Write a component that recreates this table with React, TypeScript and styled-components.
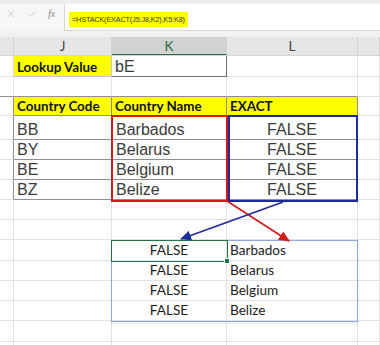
import React from 'react'
import styled, { createGlobalStyle } from 'styled-components'
import { X, Check } from 'lucide-react'

const GlobalStyle = createGlobalStyle`
  html, body { margin: 0; padding: 0; background: #fff; }
`

const COLS = '14px 98px 115px 131px 1fr'
const CALIBRI = `Lato, "Open Sans", sans-serif`
const ARIAL = `"Liberation Sans", Arial, sans-serif`

const Sheet = styled.div`
  position: relative;
  width: 380px;
  height: 345px;
  overflow: hidden;
  background: #fff;
  display: flex;
  flex-direction: column;
  & > * { flex-shrink: 0; }
`

const FormulaBar = styled.div`
  display: flex;
  height: 31px;
  padding-top: 4px;
  box-sizing: border-box;
  background: #ededed;
`

const Tools = styled.div`
  width: 64px;
  display: flex;
  align-items: flex-start;
  padding: 5px 0 0 6px;
  gap: 11px;
  background: #f7f7f7;
  color: #b5b5b5;
  box-sizing: border-box;
`

const Fx = styled.span`
  font-family: "Liberation Serif", serif;
  font-style: italic;
  font-size: 10px;
  color: #8a8a8a;
  margin-top: -1px;
`

const FormulaBox = styled.div`
  flex: 1;
  background: #fff;
  border-left: 1px solid #d6d6d6;
  border-bottom: 1px solid #d6d6d6;
  padding: 4px 0 0 4px;
`

const Formula = styled.span`
  background: #ffff00;
  font-family: ${ARIAL};
  font-size: 7.2px;
  color: #333;
  padding: 3px 3px;
  letter-spacing: -0.1px;
`

const Band = styled.div`
  height: 6px;
  background: #f1f1f1;
`

const HeaderRow = styled.div`
  display: grid;
  grid-template-columns: ${COLS};
  height: 19px;
  background: #e6e6e6;
  border-bottom: 1px solid #d4d4d4;
  box-sizing: border-box;
`

const ColHead = styled.div<{ $active?: boolean }>`
  display: flex;
  justify-content: center;
  align-items: center;
  border-right: 1px solid #d0d0d0;
  background: ${p => (p.$active ? '#d2d2d2' : 'transparent')};
  border-bottom: ${p => (p.$active ? '1px solid #217346' : 'none')};
  color: ${p => (p.$active ? '#2c6a3f' : '#444')};
  font-family: ${CALIBRI};
  font-size: 13.5px;
`

const Row = styled.div<{ $h: number }>`
  display: grid;
  grid-template-columns: ${COLS};
  height: ${p => p.$h}px;
`

const Cell = styled.div<{ $fill?: string; $line?: string; $bottom?: string; $center?: boolean }>`
  box-sizing: border-box;
  display: flex;
  align-items: flex-end;
  justify-content: ${p => (p.$center ? 'center' : 'flex-start')};
  padding: 0 3px 0 3px;
  overflow: hidden;
  white-space: nowrap;
  background: ${p => p.$fill ?? '#fff'};
  border-right: 1px solid ${p => p.$line ?? '#e2e2e2'};
  border-bottom: 1px solid ${p => p.$bottom ?? p.$line ?? '#e2e2e2'};
`

const Head = styled.span`
  font-family: ${CALIBRI};
  font-weight: 700;
  font-size: 13.4px;
  color: #111;
  line-height: 17px;
`

const Data = styled.span<{ $pad?: number }>`
  font-family: ${ARIAL};
  font-size: 16px;
  color: #3a3a3a;
  line-height: 19px;
  padding-left: ${p => p.$pad ?? 0}px;
`

const Spill = styled.span`
  font-family: ${CALIBRI};
  font-size: 13.6px;
  color: #1c1c1c;
  line-height: 19px;
`

const Outline = styled.div<{ $x: number; $y: number; $w: number; $h: number; $c: string; $b: number; $shadow?: boolean }>`
  position: absolute;
  left: ${p => p.$x}px;
  top: ${p => p.$y}px;
  width: ${p => p.$w}px;
  height: ${p => p.$h}px;
  border: ${p => p.$b}px solid ${p => p.$c};
  box-sizing: border-box;
  pointer-events: none;
  box-shadow: ${p => (p.$shadow ? '0 2px 4px rgba(0,0,0,0.08)' : 'none')};
`

const Handle = styled.div`
  position: absolute;
  right: -3px;
  bottom: -3px;
  width: 4px;
  height: 4px;
  background: #217346;
  border: 1px solid #fff;
`

const Arrows = styled.svg`
  position: absolute;
  left: 0;
  top: 0;
  pointer-events: none;
`

const TABLE = '#8f8f8f'

const names = ['Barbados', 'Belarus', 'Belgium', 'Belize']
const codes = ['BB', 'BY', 'BE', 'BZ']

const Blank = ({ h, bottom }: { h: number; bottom?: string }) => (
  <Row $h={h}>
    <Cell $bottom={bottom} />
    <Cell $bottom={bottom} />
    <Cell $bottom={bottom} />
    <Cell $bottom={bottom} />
    <Cell />
  </Row>
)

export default function App() {
  return (
    <>
      <GlobalStyle />
      <Sheet>
        <FormulaBar>
          <Tools>
            <X size={10} strokeWidth={1.5} />
            <Check size={10} strokeWidth={1.5} />
            <Fx>fx</Fx>
          </Tools>
          <FormulaBox>
            <Formula>=HSTACK(EXACT(J5:J8,K2),K5:K8)</Formula>
          </FormulaBox>
        </FormulaBar>
        <Band />
        <HeaderRow>
          <ColHead />
          <ColHead>J</ColHead>
          <ColHead $active>K</ColHead>
          <ColHead>L</ColHead>
          <ColHead />
        </HeaderRow>

        <Row $h={21}>
          <Cell />
          <Cell $fill="#ffff00" $line="#c9c9c9">
            <Head>Lookup Value</Head>
          </Cell>
          <Cell $line="#6e6e6e">
            <Data>bE</Data>
          </Cell>
          <Cell />
          <Cell />
        </Row>
        <Blank h={20} bottom={TABLE} />

        <Row $h={19}>
          <Cell $line={TABLE} $bottom="#e2e2e2" />
          <Cell $fill="#ffff00" $line={TABLE}>
            <Head>Country Code</Head>
          </Cell>
          <Cell $fill="#ffff00" $line={TABLE}>
            <Head>Country Name</Head>
          </Cell>
          <Cell $fill="#ffff00" $line={TABLE}>
            <Head>EXACT</Head>
          </Cell>
          <Cell />
        </Row>
        {codes.map((c, i) => (
          <Row $h={i === 0 ? 24 : 20} key={c}>
            <Cell $line={TABLE} $bottom="#e2e2e2" />
            <Cell $line={TABLE}>
              <Data>{c}</Data>
            </Cell>
            <Cell $line={TABLE}>
              <Data $pad={1}>{names[i]}</Data>
            </Cell>
            <Cell $line={TABLE} $center>
              <Data>FALSE</Data>
            </Cell>
            <Cell />
          </Row>
        ))}
        <Blank h={20} />
        <Blank h={20} />
        {names.map((n, i) => (
          <Row $h={i === 0 ? 21 : 20} key={n}>
            <Cell />
            <Cell />
            <Cell $center>
              <Spill>FALSE</Spill>
            </Cell>
            <Cell>
              <Spill>{n}</Spill>
            </Cell>
            <Cell />
          </Row>
        ))}
        <Blank h={21} />
        <Blank h={20} />

        <Outline $x={111} $y={115} $w={117} $h={87} $c="#d41919" $b={2} />
        <Outline $x={228} $y={115} $w={130} $h={87} $c="#1c2a9c" $b={2} />
        <Outline $x={111} $y={240} $w={247} $h={82} $c="#8eaadb" $b={1} $shadow />
        <Outline $x={111} $y={240} $w={117} $h={22} $c="#217346" $b={1}>
          <Handle />
        </Outline>

        <Arrows width={380} height={345} viewBox="0 0 380 345">
          <defs>
            <marker id="redHead" markerWidth="11" markerHeight="10" refX="10" refY="5" orient="auto" markerUnits="userSpaceOnUse">
              <path d="M0,0 L11,5 L0,10 Z" fill="#d41919" />
            </marker>
            <marker id="blueHead" markerWidth="11" markerHeight="10" refX="10" refY="5" orient="auto" markerUnits="userSpaceOnUse">
              <path d="M0,0 L11,5 L0,10 Z" fill="#1c2a9c" />
            </marker>
          </defs>
          <line x1="227" y1="201" x2="289" y2="241" stroke="#d41919" strokeWidth="1.6" markerEnd="url(#redHead)" />
          <line x1="283" y1="202" x2="181" y2="239" stroke="#1c2a9c" strokeWidth="1.6" markerEnd="url(#blueHead)" />
        </Arrows>
      </Sheet>
    </>
  )
}
